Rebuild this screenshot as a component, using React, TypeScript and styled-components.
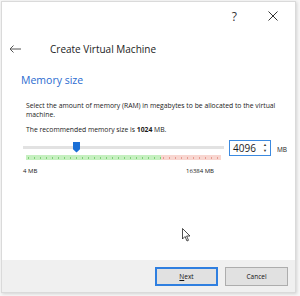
import React from "react"
import styled, { createGlobalStyle } from "styled-components"

const Global = createGlobalStyle`
  body {
    margin: 0;
    background: #ffffff;
    font-family: "Open Sans", "Noto Sans", sans-serif;
    color: #1a1a1a;
  }
`

const Frame = styled.div`
  width: 300px;
  height: 296px;
  padding: 1px 4px 3px 1px;
  box-sizing: border-box;
  background: #f7f7f7;
`

const Window = styled.div`
  height: 100%;
  background: #ffffff;
  border: 1px solid #dadada;
  box-shadow: 1px 1px 3px rgba(0, 0, 0, 0.15);
  display: flex;
  flex-direction: column;
  box-sizing: border-box;
`

const TitleBar = styled.div`
  height: 28px;
  display: flex;
  justify-content: flex-end;
  align-items: center;
  gap: 31px;
  padding-right: 17px;
  font-size: 12px;
  color: #333;
`

const Header = styled.div`
  display: flex;
  align-items: center;
  height: 38px;
  padding-left: 7px;
  gap: 28px;
  font-size: 10px;
  color: #222;
`

const Body = styled.div`
  flex: 1;
  padding: 0 0 0 19px;
  position: relative;
`

const Section = styled.div`
  font-size: 10.5px;
  color: #2a6bd0;
  margin-top: 5px;
`

const Text = styled.p`
  font-size: 6.8px;
  line-height: 8.5px;
  margin: 0;
  padding-right: 8px;
  padding-left: 5px;
`

const SliderRow = styled.div`
  display: flex;
  align-items: flex-start;
  margin-top: 6px;
  padding-left: 2px;
`

const SliderCol = styled.div`
  width: 201px;
  display: flex;
  flex-direction: column;
`

const Track = styled.div`
  position: relative;
  height: 14px;
  display: flex;
  align-items: center;
  &::before {
    content: "";
    display: block;
    width: 100%;
    height: 3px;
    background: #e2e2e2;
  }
`

const Thumb = styled.div`
  position: absolute;
  left: 50px;
  top: 1px;
  width: 7px;
  height: 11px;
  background: #1a6fd6;
  clip-path: polygon(0 0, 100% 0, 100% 70%, 50% 100%, 0 70%);
`

const Ticks = styled.div`
  height: 5px;
  width: 195px;
  margin-left: 3px;
  display: flex;
`

const Zone = styled.div<{ $color: string; $tick: string; $w: number }>`
  width: ${p => p.$w}px;
  height: 100%;
  background-color: ${p => p.$color};
  background-image: linear-gradient(to right, ${p => p.$tick} 1px, transparent 1px);
  background-size: 6px 2px;
  background-position: 2px 2px;
  background-repeat: repeat-x;
`

const Range = styled.div`
  display: flex;
  justify-content: space-between;
  font-size: 6px;
  margin-top: 7px;
  padding-right: 10px;
`

const Spin = styled.div`
  margin-left: 5px;
  width: 42px;
  height: 16px;
  margin-top: -1px;
  border: 1px solid #3c8ae0;
  box-sizing: border-box;
  display: flex;
  align-items: center;
  font-size: 10px;
  padding-left: 3px;
  justify-content: space-between;
`

const Arrows = styled.div`
  width: 8px;
  height: 12px;
  margin-right: 1px;
  display: flex;
  flex-direction: column;
  align-items: center;
  justify-content: center;
  gap: 2px;
  font-size: 4px;
  line-height: 4px;
  color: #333;
`

const Unit = styled.span`
  font-size: 6.5px;
  margin-left: 6px;
  margin-top: 4px;
`

const Footer = styled.div`
  height: 32px;
  background: #f0f0f0;
  display: flex;
  justify-content: flex-end;
  align-items: center;
  gap: 7px;
  padding-right: 7px;
`

const Button = styled.button<{ $primary?: boolean }>`
  width: 63px;
  height: 19px;
  font-family: inherit;
  font-size: 6.5px;
  background: #e1e1e1;
  border: 1px solid ${p => (p.$primary ? "#2f7fe0" : "#adadad")};
  box-shadow: ${p => (p.$primary ? "inset 0 0 0 1px #2f7fe0" : "none")};
  color: #111;
  padding: 0;
`

const Cursor = styled.svg`
  position: absolute;
  left: 180px;
  top: 160px;
`

export default function App() {
  return (
    <>
      <Global />
      <Frame>
        <Window>
          <TitleBar>
            <span>?</span>
            <svg width="10" height="10" viewBox="0 0 10 10">
              <path d="M0.5 0.5 L9.5 9.5 M9.5 0.5 L0.5 9.5" stroke="#333" strokeWidth="1" />
            </svg>
          </TitleBar>
          <Header>
            <svg width="13" height="8" viewBox="0 0 13 8">
              <path d="M1 4 H12 M4.5 0.5 L1 4 L4.5 7.5" stroke="#555" strokeWidth="1" fill="none" />
            </svg>
            <span>Create Virtual Machine</span>
          </Header>
          <Body>
            <Section>Memory size</Section>
            <div style={{ height: 15 }} />
            <Text>Select the amount of memory (RAM) in megabytes to be allocated to the virtual machine.</Text>
            <div style={{ height: 7 }} />
            <Text>The recommended memory size is <b>1024</b> MB.</Text>
            <SliderRow>
              <SliderCol>
                <Track>
                  <Thumb />
                </Track>
                <Ticks>
                  <Zone $w={135} $color="#c6f0c0" $tick="#7fcf77" />
                  <Zone $w={60} $color="#f8d6d0" $tick="#e59a90" />
                </Ticks>
                <Range>
                  <span>4 MB</span>
                  <span>16384 MB</span>
                </Range>
              </SliderCol>
              <Spin>
                <span>4096</span>
                <Arrows>
                  <span>▲</span>
                  <span>▼</span>
                </Arrows>
              </Spin>
              <Unit>MB</Unit>
            </SliderRow>
            <Cursor width="10" height="14" viewBox="0 0 10 14">
              <path d="M0.5 0.5 L0.5 11 L3 8.5 L5 13 L6.5 12.3 L4.6 8 L8 8 Z" fill="#fff" stroke="#222" strokeWidth="0.8" />
            </Cursor>
          </Body>
          <Footer>
            <Button $primary><u>N</u>ext</Button>
            <Button>Cancel</Button>
          </Footer>
        </Window>
      </Frame>
    </>
  )
}
